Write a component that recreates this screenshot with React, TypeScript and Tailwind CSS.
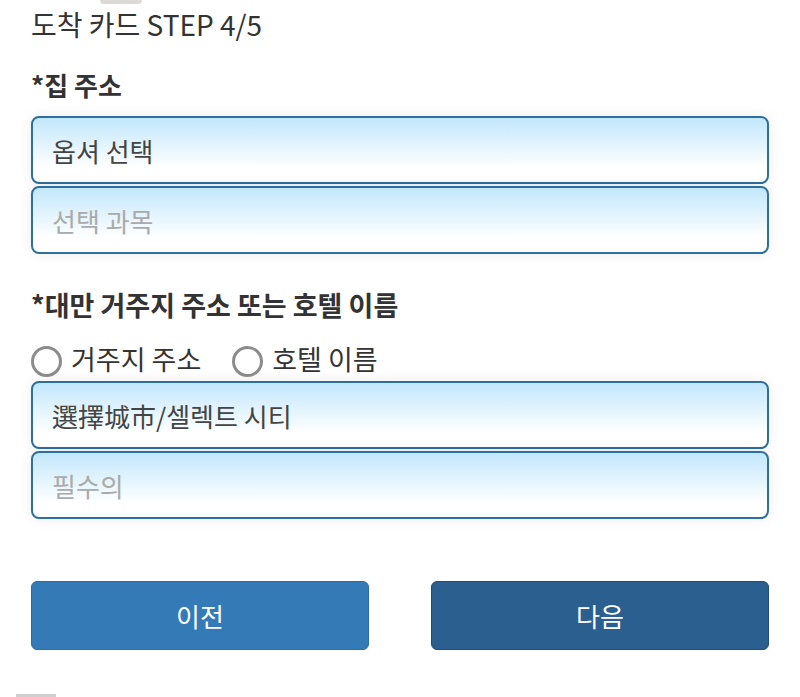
import React from "react";

const font = { fontFamily: '"Noto Sans CJK KR", "Noto Sans", sans-serif' };

function Field({ text, placeholder }: { text?: string; placeholder?: string }) {
  return (
    <div className="h-[68px] rounded-[8px] border-2 border-[#2e6f9e] bg-[linear-gradient(to_bottom,#c2e7fc,#ffffff_78%)] shadow-[0_0_14px_rgba(0,0,0,0.08)] flex items-center px-[19px]">
      {text ? (
        <span className="text-[26px] text-[#444]">{text}</span>
      ) : (
        <span className="text-[26px] text-[#aaa]">{placeholder}</span>
      )}
    </div>
  );
}

function Radio({ label }: { label: string }) {
  return (
    <label className="flex items-center gap-[9px]">
      <span className="w-[31px] h-[31px] rounded-full border-[3px] border-[#8c8c8c] bg-white mt-[4px]" />
      <span className="text-[27px] text-[#333]">{label}</span>
    </label>
  );
}

export default function App() {
  return (
    <div className="w-[800px] h-[697px] bg-white overflow-hidden relative" style={font}>
      {/* logo peeking in at the top */}
      <div className="ml-[100px] w-[42px] h-[4px] rounded-b-full bg-[#dcdad6]" />

      <div className="px-[31px]">
        <h1 className="text-[28px] leading-[36px] text-[#333] font-normal mt-[2px]">도착 카드 STEP 4/5</h1>

        <h2 className="mt-[25px] text-[26px] leading-[36px] font-bold text-[#333]">*집 주소</h2>
        <div className="mt-[13px] flex flex-col gap-[2px]">
          <Field text="옵셔 선택" />
          <Field placeholder="선택 과목" />
        </div>

        <h2 className="mt-[33px] text-[27px] leading-[36px] font-bold text-[#333]">*대만 거주지 주소 또는 호텔 이름</h2>
        <div className="mt-[18px] h-[36px] flex items-center gap-[31px]">
          <Radio label="거주지 주소" />
          <Radio label="호텔 이름" />
        </div>
        <div className="mt-[4px] flex flex-col gap-[2px]">
          <Field text="選擇城市/셀렉트 시티" />
          <Field placeholder="필수의" />
        </div>

        <div className="mt-[62px] flex gap-[62px]">
          <button className="flex-1 h-[69px] rounded-[6px] bg-[#337ab7] border border-[#2e6da4] text-white text-[26px]">이전</button>
          <button className="flex-1 h-[69px] rounded-[6px] bg-[#2a5f8f] border border-[#204d74] text-white text-[26px]">다음</button>
        </div>
      </div>

      <div className="mt-[44px] ml-[16px] w-[40px] h-[3px] bg-[#d0d0d0]" />
    </div>
  );
}
